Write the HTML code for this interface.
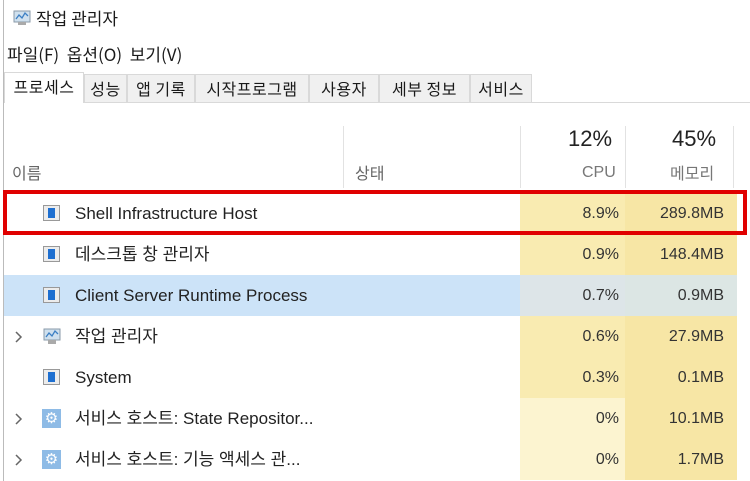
<!DOCTYPE html>
<html><head><meta charset="utf-8"><style>
*{margin:0;padding:0;box-sizing:border-box}
body{width:750px;height:481px;background:#fff;position:relative;overflow:hidden;font-family:"Liberation Sans","Noto Sans CJK KR",sans-serif;color:#1a1a1a}
.a{position:absolute;white-space:nowrap}
.k{font-family:"Noto Sans CJK KR","Liberation Sans",sans-serif}
.tab{position:absolute;top:74px;height:28px;background:#f0f0f0;border:1px solid #d9d9d9;border-bottom:none;font-size:16px;line-height:26px;text-align:center;font-family:"Noto Sans CJK KR",sans-serif;letter-spacing:0.5px}
.row{position:absolute;left:4px;width:733px;height:41px}
.cpu{position:absolute;left:516px;width:105px;height:100%;background:#f9ebb1;text-align:right;padding-right:6px;font-size:16px;line-height:41px;color:#333}
.mem{position:absolute;left:621px;width:112px;height:100%;background:#f7e6a5;text-align:right;padding-right:13px;font-size:16px;line-height:41px;color:#333}
.nm{position:absolute;left:71px;font-size:17px;line-height:41px;color:#222;font-family:"Liberation Sans","Noto Sans CJK KR",sans-serif}
.ic{position:absolute;left:39px;top:12px;width:17px;height:16px;border:1px solid #999;background:#ececec}
.ic:after{content:"";position:absolute;left:4px;top:2px;width:7px;height:10px;background:#1e6fd0}
.gear{position:absolute;left:38px;top:11px;width:19px;height:19px;background:#8ebbe6;color:#fff;font-size:15px;line-height:19px;text-align:center}
.chev{position:absolute;left:10px;top:14px}
</style></head><body>
<div class="a" style="left:3px;top:0;width:1px;height:481px;background:#bbb"></div>
<svg class="a" style="left:13px;top:10px" width="18" height="16"><rect x="1" y="1" width="16" height="11" fill="#cfe0ee" stroke="#8a9aa8"/><polyline points="3,9 6,5 9,8 12,3 15,6" fill="none" stroke="#3b7fc4" stroke-width="1.3"/><rect x="5" y="12" width="8" height="3" fill="#aaa"/></svg>
<div class="a k" style="left:36px;top:5px;font-size:17px">작업 관리자</div>
<div class="a k" style="left:7px;top:41px;font-size:17px">파일(F)&nbsp; 옵션(O)&nbsp; 보기(V)</div>
<div class="a" style="left:4px;top:102px;width:746px;height:1px;background:#d9d9d9"></div>
<div class="tab" style="left:4px;width:80px;background:#fff;top:72px;height:31px;border-color:#d9d9d9">프로세스</div>
<div class="tab" style="left:84px;width:43px">성능</div>
<div class="tab" style="left:127px;width:68px">앱 기록</div>
<div class="tab" style="left:195px;width:114px">시작프로그램</div>
<div class="tab" style="left:309px;width:70px">사용자</div>
<div class="tab" style="left:379px;width:91px">세부 정보</div>
<div class="tab" style="left:470px;width:62px">서비스</div>
<div class="a" style="left:343px;top:126px;width:1px;height:62px;background:#e2e2e2"></div>
<div class="a" style="left:520px;top:126px;width:1px;height:62px;background:#e2e2e2"></div>
<div class="a" style="left:625px;top:126px;width:1px;height:62px;background:#e2e2e2"></div>
<div class="a" style="left:733px;top:126px;width:1px;height:62px;background:#e2e2e2"></div>
<div class="a k" style="left:12px;top:160px;font-size:16px;color:#666">이름</div>
<div class="a k" style="left:355px;top:160px;font-size:16px;color:#666">상태</div>
<div class="a" style="left:568px;top:126px;font-size:22px;color:#222">12%</div>
<div class="a" style="left:672px;top:126px;font-size:22px;color:#222">45%</div>
<div class="a" style="left:582px;top:164px;font-size:16px;color:#777">CPU</div>
<div class="a k" style="left:670px;top:160px;font-size:16px;color:#777">메모리</div>

<div class="row" style="top:193px"><div class="ic"></div><div class="nm">Shell Infrastructure Host</div><div class="cpu">8.9%</div><div class="mem">289.8MB</div></div>
<div class="row" style="top:234px"><div class="ic"></div><div class="nm">데스크톱 창 관리자</div><div class="cpu">0.9%</div><div class="mem">148.4MB</div></div>
<div class="row" style="top:275px;background:#cce3f8"><div class="ic"></div><div class="nm">Client Server Runtime Process</div><div class="cpu" style="background:#dde5e8">0.7%</div><div class="mem" style="background:#dce6e4">0.9MB</div></div>
<div class="row" style="top:316px"><svg class="chev" width="10" height="14"><polyline points="2,2 7,7 2,12" fill="none" stroke="#666" stroke-width="1.5"/></svg><svg class="a" style="left:39px;top:12px" width="18" height="17"><rect x="1" y="1" width="16" height="11" fill="#cfe0ee" stroke="#8a9aa8"/><polyline points="3,9 6,5 9,8 12,3 15,6" fill="none" stroke="#3b7fc4" stroke-width="1.3"/><rect x="5" y="12" width="8" height="4" fill="#aaa"/></svg><div class="nm">작업 관리자</div><div class="cpu">0.6%</div><div class="mem">27.9MB</div></div>
<div class="row" style="top:357px"><div class="ic"></div><div class="nm">System</div><div class="cpu">0.3%</div><div class="mem">0.1MB</div></div>
<div class="row" style="top:398px"><svg class="chev" width="10" height="14"><polyline points="2,2 7,7 2,12" fill="none" stroke="#666" stroke-width="1.5"/></svg><div class="gear">⚙</div><div class="nm">서비스 호스트: State Repositor...</div><div class="cpu" style="background:#fcf4d0">0%</div><div class="mem">10.1MB</div></div>
<div class="row" style="top:439px"><svg class="chev" width="10" height="14"><polyline points="2,2 7,7 2,12" fill="none" stroke="#666" stroke-width="1.5"/></svg><div class="gear">⚙</div><div class="nm">서비스 호스트: 기능 액세스 관...</div><div class="cpu" style="background:#fcf4d0">0%</div><div class="mem">1.7MB</div></div>

<div class="a" style="left:3px;top:190px;width:744px;height:45px;border:4px solid #e00000"></div>
</body></html>
